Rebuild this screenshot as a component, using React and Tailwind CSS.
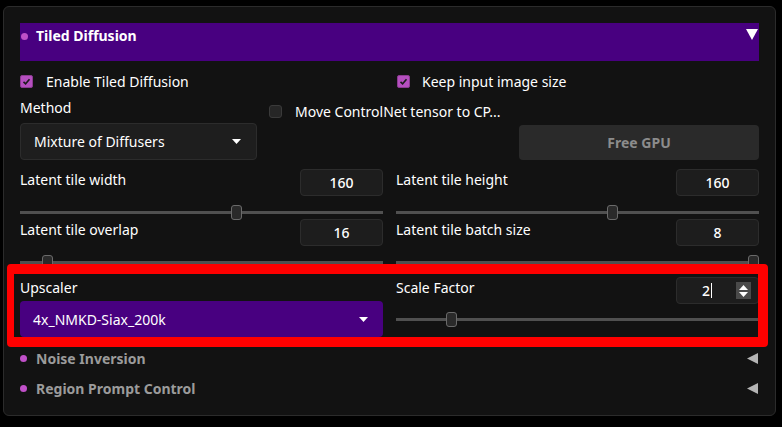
import React from "react";

const FONT = { fontFamily: "'Noto Sans', 'Open Sans', sans-serif" };

function Check({ on }) {
  if (!on) {
    return <span className="h-[13px] w-[13px] shrink-0 rounded-[3px] border border-[#3a3a3a] bg-[#262626]" />;
  }
  return (
    <span className="flex h-[13px] w-[13px] shrink-0 items-center justify-center rounded-[2px] border border-[#8a3a90] bg-[#b54fbf]">
      <svg width="9" height="9" viewBox="0 0 9 9">
        <path d="M1.5 4.8 L3.6 6.8 L7.5 2.2" fill="none" stroke="#1a1a1a" strokeWidth="1.6" />
      </svg>
    </span>
  );
}

function Caret() {
  return (
    <svg width="9" height="5" viewBox="0 0 9 5">
      <path d="M0 0 H9 L4.5 5 Z" fill="#ffffff" />
    </svg>
  );
}

function NumBox({ value }) {
  return (
    <div className="flex h-[27px] w-[83px] items-center justify-center rounded-[4px] border border-[#2c2c2c] bg-[#1d1d1d] text-[14px] font-medium text-white">
      {value}
    </div>
  );
}

function Slider({ pos, full }) {
  return (
    <div className="relative h-[15px] w-full">
      <div className="absolute left-0 right-0 top-[6px] h-[3px] bg-[#505050]" />
      <div
        className="absolute top-0 h-[15px] w-[11px] rounded-[3px] border border-[#6a6a6a] bg-[#2a2a2a]"
        style={{ left: full ? undefined : pos, right: full ? 0 : undefined }}
      />
    </div>
  );
}

function SliderBlock({ label, value, pos, full }) {
  return (
    <div className="w-full">
      <div className="flex items-start justify-between">
        <span className="mt-[1px] text-[14px] leading-[20px] text-white">{label}</span>
        <NumBox value={value} />
      </div>
      <div className="mt-[9px]">
        <Slider pos={pos} full={full} />
      </div>
    </div>
  );
}

function Section({ label }) {
  return (
    <div className="flex h-[20px] items-center">
      <span className="h-[7px] w-[7px] rounded-full bg-[#c050c8]" />
      <span className="ml-[9px] text-[14px] font-bold text-[#9b9b9b]">{label}</span>
      <svg className="ml-auto mr-[1px]" width="11" height="11" viewBox="0 0 11 11">
        <path d="M11 0 V11 L0 5.5 Z" fill="#b4b4b4" />
      </svg>
    </div>
  );
}

export default function App() {
  return (
    <div className="relative h-[427px] w-[782px] overflow-hidden bg-black" style={FONT}>
      <div className="ml-[3px] mt-[6px] h-[410px] w-[773px] rounded-[6px] border border-[#2b2b2b] bg-[#121212] px-4 pt-4">
        {/* header */}
        <div className="flex h-[38px] items-start bg-[#480080] pt-[3px]">
          <span className="ml-[1px] mt-[7px] h-[7px] w-[7px] rounded-full bg-[#c050c8]" />
          <span className="ml-[8px] text-[14px] font-bold leading-[20px] text-white">Tiled Diffusion</span>
          <svg className="ml-auto mr-[1px] mt-[3px]" width="12" height="11" viewBox="0 0 12 11">
            <path d="M0 0 H12 L6 11 Z" fill="#ffffff" />
          </svg>
        </div>

        {/* checkbox row */}
        <div className="mt-[10px] grid h-[20px] grid-cols-2 gap-[13px]">
          <label className="flex items-center">
            <Check on />
            <span className="ml-[13px] text-[14px] text-white">Enable Tiled Diffusion</span>
          </label>
          <label className="flex items-center pl-[1px]">
            <Check on />
            <span className="ml-[12px] text-[14px] text-white">Keep input image size</span>
          </label>
        </div>

        {/* method row */}
        <div className="mt-[7px] grid grid-cols-[237px_238px_1fr] gap-[12px]">
          <div>
            <div className="text-[14px] leading-[20px] text-white">Method</div>
            <div className="mt-[5px] flex h-[37px] items-center justify-between rounded-[4px] border border-[#2c2c2c] bg-[#1e1e1e] pl-[13px] pr-[15px]">
              <span className="text-[14px] text-white">Mixture of Diffusers</span>
              <Caret />
            </div>
          </div>
          <div>
            <label className="mt-[3px] flex h-[20px] items-center">
              <Check />
              <span className="ml-[13px] whitespace-nowrap text-[14px] text-white">Move ControlNet tensor to CP...</span>
            </label>
          </div>
          <div className="pt-[27px]">
            <div className="flex h-[35px] items-center justify-center rounded-[4px] bg-[#2a2a2a] text-[14px] font-bold text-[#8c8c8c]">
              Free GPU
            </div>
          </div>
        </div>

        {/* latent sliders */}
        <div className="mt-[9px] grid grid-cols-2 gap-x-[13px]">
          <SliderBlock label="Latent tile width" value="160" pos={211} />
          <SliderBlock label="Latent tile height" value="160" pos={211} />
        </div>
        <div className="mt-[-1px] grid grid-cols-2 gap-x-[13px]">
          <SliderBlock label="Latent tile overlap" value="16" pos={22} />
          <SliderBlock label="Latent tile batch size" value="8" full />
        </div>

        {/* upscaler row */}
        <div className="mt-[7px] grid grid-cols-2 gap-x-[13px]">
          <div>
            <div className="mt-[1px] text-[14px] leading-[20px] text-white">Upscaler</div>
            <div className="mt-[3px] flex h-[36px] items-center justify-between rounded-[4px] bg-[#480080] pl-[13px] pr-[15px]">
              <span className="text-[14px] text-white">4x_NMKD-Siax_200k</span>
              <Caret />
            </div>
          </div>
          <div>
            <div className="flex items-start justify-between">
              <span className="mt-[1px] text-[14px] leading-[20px] text-white">Scale Factor</span>
              <div className="flex h-[27px] w-[83px] items-center justify-end rounded-[4px] border border-[#2c2c2c] bg-[#1d1d1d] pr-[7px]">
                <span className="text-[14px] font-medium text-white">2</span>
                <span className="ml-[1px] h-[15px] w-[1px] bg-white" />
                <span className="ml-[24px] flex h-[17px] w-[15px] flex-col items-center justify-center gap-[2px] bg-[#4a4a4a]">
                  <svg width="9" height="5" viewBox="0 0 9 5"><path d="M0 5 H9 L4.5 0 Z" fill="#fff" /></svg>
                  <svg width="9" height="5" viewBox="0 0 9 5"><path d="M0 0 H9 L4.5 5 Z" fill="#fff" /></svg>
                </span>
              </div>
            </div>
            <div className="mt-[8px]">
              <Slider pos={50} />
            </div>
          </div>
        </div>

        {/* collapsed sections */}
        <div className="mt-[11px]">
          <Section label="Noise Inversion" />
        </div>
        <div className="mt-[10px]">
          <Section label="Region Prompt Control" />
        </div>
      </div>

      {/* red highlight annotation */}
      <div className="absolute left-[7px] top-[264px] h-[83px] w-[761px] rounded-[4px] border-y-[10px] border-l-[7px] border-r-[10px] border-[#ff0000]" />
    </div>
  );
}
